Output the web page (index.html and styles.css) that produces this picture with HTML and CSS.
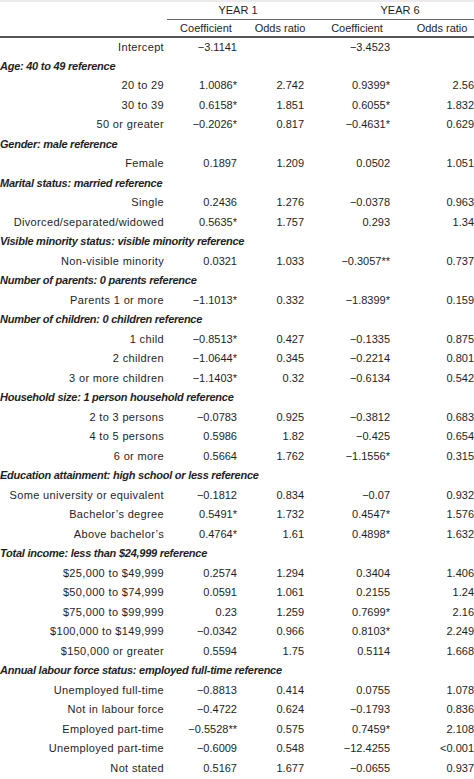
FILE: index.html
```html
<!DOCTYPE html>
<html>
<head>
<meta charset="utf-8">
<link rel="stylesheet" href="styles.css">
</head>
<body>
<div class="page">
<table class="reg">
<colgroup>
<col class="c-label"><col class="c-coef1"><col class="c-odds1"><col class="c-coef2"><col class="c-odds2">
</colgroup>
<thead>
<tr class="h1">
<th class="blank"></th><th colspan="2" class="year y1">YEAR 1</th><th colspan="2" class="year y6">YEAR 6</th>
</tr>
<tr class="h2">
<th class="blank"></th><th>Coefficient</th><th>Odds ratio</th><th>Coefficient</th><th>Odds ratio</th>
</tr>
</thead>
<tbody>
<tr><td class="lab">Intercept</td><td class="v1">−3.1141</td><td class="v2"></td><td class="v3">−3.4523</td><td class="v4"></td></tr>
<tr class="sec"><td colspan="5">Age: 40 to 49 reference</td></tr>
<tr><td class="lab">20 to 29</td><td class="v1">1.0086*</td><td class="v2">2.742</td><td class="v3">0.9399*</td><td class="v4">2.56</td></tr>
<tr><td class="lab">30 to 39</td><td class="v1">0.6158*</td><td class="v2">1.851</td><td class="v3">0.6055*</td><td class="v4">1.832</td></tr>
<tr><td class="lab">50 or greater</td><td class="v1">−0.2026*</td><td class="v2">0.817</td><td class="v3">−0.4631*</td><td class="v4">0.629</td></tr>
<tr class="sec"><td colspan="5">Gender: male reference</td></tr>
<tr><td class="lab">Female</td><td class="v1">0.1897</td><td class="v2">1.209</td><td class="v3">0.0502</td><td class="v4">1.051</td></tr>
<tr class="sec"><td colspan="5">Marital status: married reference</td></tr>
<tr><td class="lab">Single</td><td class="v1">0.2436</td><td class="v2">1.276</td><td class="v3">−0.0378</td><td class="v4">0.963</td></tr>
<tr><td class="lab">Divorced/separated/widowed</td><td class="v1">0.5635*</td><td class="v2">1.757</td><td class="v3">0.293</td><td class="v4">1.34</td></tr>
<tr class="sec"><td colspan="5">Visible minority status: visible minority reference</td></tr>
<tr><td class="lab">Non-visible minority</td><td class="v1">0.0321</td><td class="v2">1.033</td><td class="v3">−0.3057**</td><td class="v4">0.737</td></tr>
<tr class="sec"><td colspan="5">Number of parents: 0 parents reference</td></tr>
<tr><td class="lab">Parents 1 or more</td><td class="v1">−1.1013*</td><td class="v2">0.332</td><td class="v3">−1.8399*</td><td class="v4">0.159</td></tr>
<tr class="sec"><td colspan="5">Number of children: 0 children reference</td></tr>
<tr><td class="lab">1 child</td><td class="v1">−0.8513*</td><td class="v2">0.427</td><td class="v3">−0.1335</td><td class="v4">0.875</td></tr>
<tr><td class="lab">2 children</td><td class="v1">−1.0644*</td><td class="v2">0.345</td><td class="v3">−0.2214</td><td class="v4">0.801</td></tr>
<tr><td class="lab">3 or more children</td><td class="v1">−1.1403*</td><td class="v2">0.32</td><td class="v3">−0.6134</td><td class="v4">0.542</td></tr>
<tr class="sec"><td colspan="5">Household size: 1 person household reference</td></tr>
<tr><td class="lab">2 to 3 persons</td><td class="v1">−0.0783</td><td class="v2">0.925</td><td class="v3">−0.3812</td><td class="v4">0.683</td></tr>
<tr><td class="lab">4 to 5 persons</td><td class="v1">0.5986</td><td class="v2">1.82</td><td class="v3">−0.425</td><td class="v4">0.654</td></tr>
<tr><td class="lab">6 or more</td><td class="v1">0.5664</td><td class="v2">1.762</td><td class="v3">−1.1556*</td><td class="v4">0.315</td></tr>
<tr class="sec"><td colspan="5">Education attainment: high school or less reference</td></tr>
<tr><td class="lab">Some university or equivalent</td><td class="v1">−0.1812</td><td class="v2">0.834</td><td class="v3">−0.07</td><td class="v4">0.932</td></tr>
<tr><td class="lab">Bachelor’s degree</td><td class="v1">0.5491*</td><td class="v2">1.732</td><td class="v3">0.4547*</td><td class="v4">1.576</td></tr>
<tr><td class="lab">Above bachelor’s</td><td class="v1">0.4764*</td><td class="v2">1.61</td><td class="v3">0.4898*</td><td class="v4">1.632</td></tr>
<tr class="sec"><td colspan="5">Total income: less than $24,999 reference</td></tr>
<tr><td class="lab">$25,000 to $49,999</td><td class="v1">0.2574</td><td class="v2">1.294</td><td class="v3">0.3404</td><td class="v4">1.406</td></tr>
<tr><td class="lab">$50,000 to $74,999</td><td class="v1">0.0591</td><td class="v2">1.061</td><td class="v3">0.2155</td><td class="v4">1.24</td></tr>
<tr><td class="lab">$75,000 to $99,999</td><td class="v1">0.23</td><td class="v2">1.259</td><td class="v3">0.7699*</td><td class="v4">2.16</td></tr>
<tr><td class="lab">$100,000 to $149,999</td><td class="v1">−0.0342</td><td class="v2">0.966</td><td class="v3">0.8103*</td><td class="v4">2.249</td></tr>
<tr><td class="lab">$150,000 or greater</td><td class="v1">0.5594</td><td class="v2">1.75</td><td class="v3">0.5114</td><td class="v4">1.668</td></tr>
<tr class="sec"><td colspan="5">Annual labour force status: employed full-time reference</td></tr>
<tr><td class="lab">Unemployed full-time</td><td class="v1">−0.8813</td><td class="v2">0.414</td><td class="v3">0.0755</td><td class="v4">1.078</td></tr>
<tr><td class="lab">Not in labour force</td><td class="v1">−0.4722</td><td class="v2">0.624</td><td class="v3">−0.1793</td><td class="v4">0.836</td></tr>
<tr><td class="lab">Employed part-time</td><td class="v1">−0.5528**</td><td class="v2">0.575</td><td class="v3">0.7459*</td><td class="v4">2.108</td></tr>
<tr><td class="lab">Unemployed part-time</td><td class="v1">−0.6009</td><td class="v2">0.548</td><td class="v3">−12.4255</td><td class="v4">&lt;0.001</td></tr>
<tr><td class="lab">Not stated</td><td class="v1">0.5167</td><td class="v2">1.677</td><td class="v3">−0.0655</td><td class="v4">0.937</td></tr>
</tbody>
</table>
</div>
</body>
</html>
```

FILE: styles.css
```css
html, body {
  margin: 0;
  padding: 0;
  background: #ffffff;
}
body {
  width: 474px;
  height: 779px;
  overflow: hidden;
  font-family: "Liberation Sans", Arial, sans-serif;
  font-size: 11px;
  color: #1e1e1e;
}
.page {
  border-top: 2px solid #ebebeb;
  width: 490px;
}
.reg {
  border-collapse: collapse;
  table-layout: fixed;
  width: 485px;
}
.c-label { width: 167px; }
.c-coef1 { width: 78px; }
.c-odds1 { width: 70px; }
.c-coef2 { width: 84px; }
.c-odds2 { width: 86px; }

.reg th, .reg td {
  padding: 0;
  line-height: 13px;
  white-space: nowrap;
  vertical-align: middle;
}
.reg th {
  font-weight: normal;
  text-align: center;
}
.h1 th { height: 17px; }
.h1 .year { border-bottom: 1px solid #6a6a6a; }
.h1 .y1 { padding-right: 6px; }
.h2 th {
  height: 16px;
  border-bottom: 2px solid #555555;
}
.reg tbody tr { height: 19.5px; }
.reg tbody td { text-align: right; }
.reg td.lab {
  padding-right: 3px;
  letter-spacing: 0.35px;
}
.reg td.v1 { padding-right: 8px; }
.reg td.v2 { padding-right: 11px; }
.reg td.v3 { padding-right: 9px; }
.reg td.v4 { padding-right: 11px; }
.reg tr.sec td {
  text-align: left;
  font-weight: bold;
  font-style: italic;
  letter-spacing: -0.25px;
  padding-left: 0;
}
```
